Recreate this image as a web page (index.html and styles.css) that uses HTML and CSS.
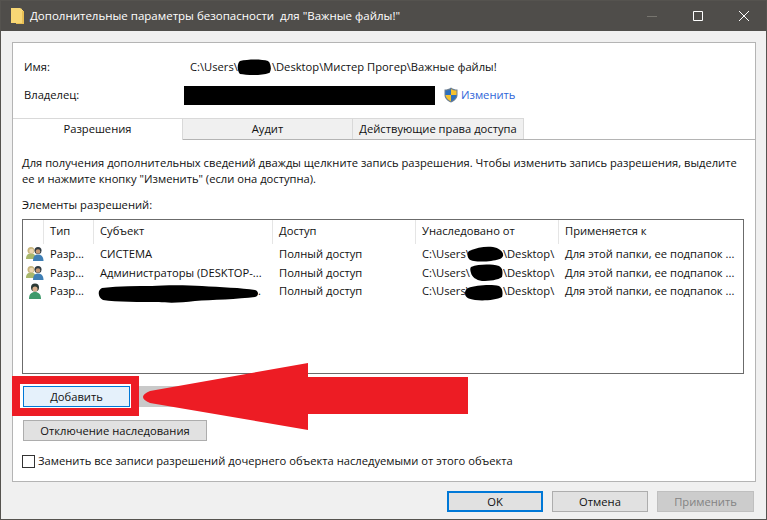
FILE: index.html
```html
<!DOCTYPE html>
<html lang="ru">
<head>
<meta charset="utf-8">
<title>Дополнительные параметры безопасности</title>
<link rel="stylesheet" href="styles.css">
</head>
<body>
<div class="window">
  <header class="titlebar">
    <svg class="folder" width="14" height="16" viewBox="0 0 14 16"><path d="M0 0h9l2 1v1h1v13H0z" fill="#f8d775"/><path d="M11 3h2v13H5v-1h6z" fill="#e8bf55"/></svg>
    <span class="title">Дополнительные параметры безопасности&nbsp; для "Важные файлы!"</span>
    <div class="controls">
      <svg width="12" height="12" viewBox="0 0 12 12"><path d="M1 6.500h10" stroke="#77756f"/></svg>
      <svg width="12" height="12" viewBox="0 0 12 12"><path d="M1.500 1.500h9v9h-9z" fill="none" stroke="#fff"/></svg>
      <svg width="12" height="12" viewBox="0 0 12 12"><path d="M1 1l10 10M11 1L1 11" stroke="#fff" fill="none"/></svg>
    </div>
  </header>

  <main class="panel">
    <div class="info">
      <div class="info-row name-row"><span class="info-label">Имя:</span><span class="path">C:\Users\<span class="gap-user"></span>\Desktop\Мистер Прогер\Важные файлы!</span></div>
      <div class="info-row owner-row">
        <span class="info-label">Владелец:</span>
        <span class="owner-bar"></span>
        <svg class="shield" width="14" height="16" viewBox="0 0 14 16"><path d="M7 .5C5 2 3 2.500.5 2.500V8c0 3.500 3 6 6.500 7.500 3.500-1.500 6.500-4 6.500-7.500V2.500C11 2.500 9 2 7 .5z" fill="#6d7f92"/><path d="M7 2v6H1.500V3.500C3.500 3.500 5.500 3 7 2z" fill="#2c6fbe"/><path d="M7 2c1.500 1 3.500 1.500 5.500 1.500V8H7z" fill="#f5c22e"/><path d="M7 8H1.500C1.800 10.800 4.200 13 7 14.300z" fill="#f5c22e"/><path d="M7 8h5.500c-.3 2.800-2.700 5-5.500 6.300z" fill="#2c6fbe"/></svg>
        <a class="change-link">Изменить</a>
      </div>
    </div>

    <nav class="tabs">
      <div class="tab active">Разрешения</div>
      <div class="tab">Аудит</div>
      <div class="tab">Действующие права доступа</div>
    </nav>

    <section class="body">
      <p class="hint">Для получения дополнительных сведений дважды щелкните запись разрешения. Чтобы изменить запись разрешения, выделите<br>ее и нажмите кнопку "Изменить" (если она доступна).</p>
      <div class="list-label">Элементы разрешений:</div>
      <div class="list">
        <div class="row head">
          <span class="c0"></span><span class="c1">Тип</span><span class="c2">Субъект</span><span class="c3">Доступ</span><span class="c4">Унаследовано от</span><span class="c5">Применяется к</span>
        </div>
        <div class="row">
          <span class="c0"><svg width="18" height="16" viewBox="0 0 18 16"><path d="M0 13c0-4 2-5.500 5-5.500S10 9 10 13z" fill="#a9b86c"/><circle cx="5" cy="4.500" r="3.500" fill="#c8b67e"/><circle cx="5.500" cy="5" r="2.300" fill="#ecd6b0"/><path d="M7 15c0-4.500 2-6.500 5-6.500s5.500 2 5.500 6.500z" fill="#3f7fb5"/><circle cx="12" cy="4.500" r="3.500" fill="#2f3a42"/><circle cx="12" cy="5.500" r="2.300" fill="#c79a76"/></svg></span>
          <span class="c1">Разр...</span><span class="c2">СИСТЕМА</span><span class="c3">Полный доступ</span><span class="c4">C:\Users\<i class="pad"></i>\Desktop\</span><span class="c5">Для этой папки, ее подпапок ...</span>
        </div>
        <div class="row">
          <span class="c0"><svg width="18" height="16" viewBox="0 0 18 16"><path d="M0 13c0-4 2-5.500 5-5.500S10 9 10 13z" fill="#a9b86c"/><circle cx="5" cy="4.500" r="3.500" fill="#c8b67e"/><circle cx="5.500" cy="5" r="2.300" fill="#ecd6b0"/><path d="M7 15c0-4.500 2-6.500 5-6.500s5.500 2 5.500 6.500z" fill="#3f7fb5"/><circle cx="12" cy="4.500" r="3.500" fill="#2f3a42"/><circle cx="12" cy="5.500" r="2.300" fill="#c79a76"/></svg></span>
          <span class="c1">Разр...</span><span class="c2">Администраторы (DESKTOP-...</span><span class="c3">Полный доступ</span><span class="c4">C:\Users\<i class="pad"></i>\Desktop\</span><span class="c5">Для этой папки, ее подпапок ...</span>
        </div>
        <div class="row">
          <span class="c0"><svg width="18" height="17" viewBox="0 0 18 17"><path d="M3 16c0-5 2.500-7 6-7s6 2 6 7z" fill="#3f9a6b"/><circle cx="9" cy="4.500" r="4" fill="#2b3a36"/><circle cx="9" cy="6" r="2.600" fill="#d8b08c"/></svg></span>
          <span class="c1">Разр...</span><span class="c2 redacted">.</span><span class="c3">Полный доступ</span><span class="c4">C:\Users\<i class="pad"></i>\Desktop\</span><span class="c5">Для этой папки, ее подпапок ...</span>
        </div>
      </div>
      <div class="btn-row add-row">
        <button class="btn add">Добавить</button>
        <button class="btn hidden-btn"></button>
      </div>
      <button class="btn inherit">Отключение наследования</button>
      <label class="check"><span class="box"></span>Заменить все записи разрешений дочернего объекта наследуемыми от этого объекта</label>
    </section>
  </main>

  <footer class="footer">
    <button class="btn foot ok">OK</button>
    <button class="btn foot">Отмена</button>
    <button class="btn foot off">Применить</button>
  </footer>
</div>

<svg class="overlay" width="767" height="520" viewBox="0 0 767 520">
  <g fill="#000">
    <path d="M240 61c8-2 22-2 28 0 3 2 4 10 1 12-8 3-23 2-29 1-3-3-3-11 0-13z"/>
    <path d="M469 251c8-4 18-5 24-4 6 1 11 5 10 9-1 3-6 4-12 5-8 1-19 1-22-2-2-3-2-6 0-8z"/>
    <path d="M471 267c8-3 20-3 28-1 4 2 4 7 3 11-4 3-12 4-20 4-6-1-10-4-11-8-1-3-1-5 0-6z"/>
    <path d="M468 288c8-3 24-4 31-2 4 2 4 8 3 11-6 3-18 4-27 3-7-1-10-3-10-7 0-2 1-4 3-5z"/>
    <path d="M102 288c18-2 35-2 50-2 12-1 35-1 50 0 18 1 40 2 53 4 4 1 4 6 0 7-16 2-44 3-60 4-14 2-28 2-36 1-18 0-43 0-56-2-5-2-6-10-1-12z"/>
  </g>
  <path class="arrow" d="M468 377V414H308V430L150 403Q143 400 143 397Q143 394 150 391L308 363V377z"/>
</svg>
<div class="red-box"></div>
</body>
</html>
```
FILE: styles.css
```css
* { box-sizing: border-box; }
html, body { margin: 0; padding: 0; }
body {
  width: 767px; height: 520px; overflow: hidden; position: relative;
  font: 11.2px/16px "Open Sans", "Noto Sans", "Liberation Sans", sans-serif;
  color: #111;
}
.window {
  width: 767px; height: 520px; background: #f0f0f0;
  border: 1px solid #55534f;
  display: flex; flex-direction: column;
}
.titlebar {
  height: 30px; flex: none; background: #4f4d4a; color: #fff;
  display: flex; align-items: center; padding-left: 10px; font-size: 11.5px;
}
.folder { margin-right: 5px; margin-top: -1px; }
.title { flex: 1; }
.controls { display: flex; gap: 34px; padding-right: 16px; align-items: center; }
.panel {
  margin: 11px 10px 0 11px; width: 744px; height: 440px; flex: none;
  background: #fff; border: 1px solid #b4b4b4;
  display: flex; flex-direction: column;
}
.info { padding: 16px 0 0 11px; height: 75px; flex: none; }
.info-row { display: flex; align-items: center; height: 16px; }
.owner-row { margin-top: 10px; height: 20px; }
.info-label { width: 160px; flex: none; }
.name-row .info-label { width: 166px; }
.gap-user { display: inline-block; width: 34px; }
.owner-bar { width: 251px; height: 19px; background: #000; flex: none; margin-right: 9px; }
.shield { flex: none; margin-right: 3px; }
.change-link { color: #2f66d8; }
.tabs { display: flex; height: 22px; flex: none; border-bottom: 1px solid #b4b4b4; }
.tab {
  width: 170px; height: 21px; background: #f0f0f0; border: 1px solid #d9d9d9; border-bottom: none; border-left: none;
  text-align: center; line-height: 20px;
}
.tab:nth-child(3) { width: 171px; }
.tab.active { background: #fff; height: 22px; position: relative; z-index: 1; }
.body { padding: 15px 0 0 9px; flex: 1; }
.hint { margin: 0; line-height: 16px; height: 32px; white-space: nowrap; }
.list-label { margin-top: 10px; height: 16px; }
.list {
  margin-top: 6px; width: 722px; height: 155px; border: 1px solid #6b6b6b; background: #fff;
}
.row { display: flex; height: 18.5px; line-height: 18.5px; white-space: nowrap; }
.row.head { height: 24px; line-height: 22px; margin-bottom: 1px; }
.row span { display: block; flex: none; overflow: hidden; padding-left: 6px; }
.row.head span { border-right: 1px solid #e5e5e5; }
.c0 { width: 21px; padding-left: 3px !important; }
.c0 svg { display: block; margin-top: 1px; }
.c1 { width: 50px; }
.c2 { width: 179px; }
.c3 { width: 143px; }
.c4 { width: 143px; }
.c5 { width: 184px; }
.row.head .c5 { border-right: none; }
.pad { display: inline-block; width: 33px; }
.redacted { padding-left: 164px !important; }
.btn {
  font: inherit; color: #111; background: #e1e1e1; border: 1px solid #adadad; border-radius: 0;
  padding: 0; height: 21px; display: block;
}
.btn-row { display: flex; margin-top: 12px; margin-left: 1px; gap: 9px; }
.add { width: 107px; background: #e5f1fb; border: 1px solid #0078d7; }
.hidden-btn { width: 104px; background: #c9c9c9; border-color: #c9c9c9; }
.inherit { width: 184px; margin: 13px 0 0 1px; }
.check { display: flex; align-items: center; margin-top: 12px; }
.box { width: 13px; height: 13px; border: 1px solid #333; background: #fff; margin-right: 3px; flex: none; }
.footer { display: flex; justify-content: flex-end; gap: 9px; padding: 9px 12px 0 0; }
.foot { width: 96px; }
.ok { border: 2px solid #0078d7; }
.off { background: #cccccc; border-color: #bfbfbf; color: #838383; width: 97px; }
.overlay { position: absolute; left: 0; top: 0; pointer-events: none; }
.arrow { fill: #ed1c24; }
.red-box { position: absolute; left: 12px; top: 376px; width: 127px; height: 40px; border: 8px solid #ed1c24; }
```
